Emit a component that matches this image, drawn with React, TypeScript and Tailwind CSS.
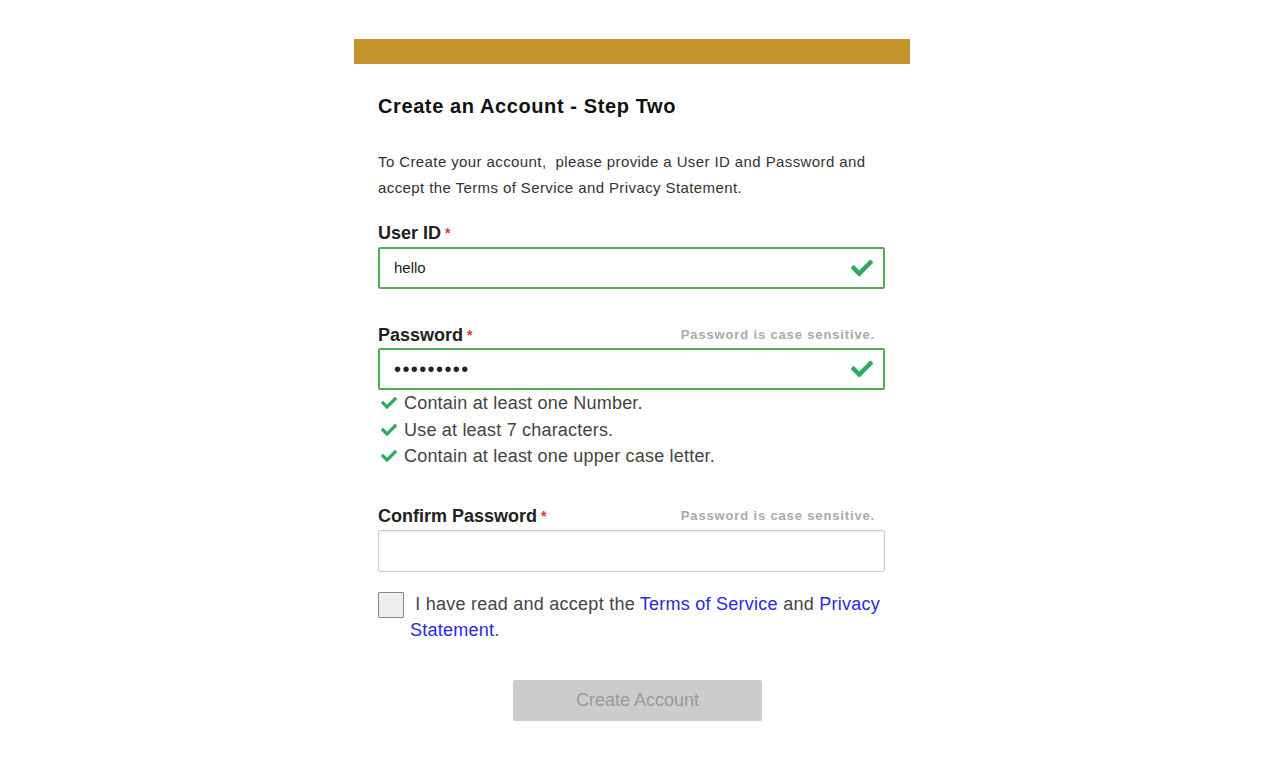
import { FaCheck } from "react-icons/fa";

const rules = [
  "Contain at least one Number.",
  "Use at least 7 characters.",
  "Contain at least one upper case letter.",
];

const Label = ({ text, hint }: { text: string; hint?: string }) => (
  <div className="flex items-end justify-between pr-[10px]">
    <span className="text-[18px] font-bold text-[#222] leading-[22px]">
      {text}
      <span className="text-[#d33] text-[14px] align-top ml-[4px]">*</span>
    </span>
    {hint && (
      <span className="text-[13px] font-bold text-[#aaa] tracking-[0.85px] leading-[20px] mb-[1px]">
        {hint}
      </span>
    )}
  </div>
);

const App = () => {
  return (
    <div className="min-h-[770px] bg-white pt-[39px] font-['Liberation_Sans',Arial,sans-serif]">
      <div className="ml-[354px] w-[556px]">
        <div className="h-[25px] bg-[#c3952a]" />

        <div className="px-[24px] pt-[30px]">
          <h1 className="text-[20px] font-bold text-[#111] tracking-[0.6px] leading-[24px]">
            Create an Account - Step Two
          </h1>

          <p className="mt-[31px] text-[15px] text-[#333] tracking-[0.4px] leading-[26px] w-[500px]">
            To Create your account,&nbsp; please provide a User ID and Password and accept the Terms of Service and Privacy Statement.
          </p>

          {/* User ID */}
          <div className="mt-[21px] w-[507px]">
            <Label text="User ID" />
            <div className="mt-[3px] h-[42px] border-2 border-[#4caf50] rounded-[2px] flex items-center justify-between pl-[14px] pr-[10px]">
              <span className="text-[15px] text-[#222]">hello</span>
              <FaCheck className="text-[#2fa95c] w-[22px] h-[22px]" />
            </div>
          </div>

          {/* Password */}
          <div className="mt-[35px] w-[507px]">
            <Label text="Password" hint="Password is case sensitive." />
            <div className="mt-[2px] h-[42px] border-2 border-[#4caf50] rounded-[2px] flex items-center justify-between pl-[14px] pr-[10px]">
              <span className="text-[20px] text-[#222] tracking-[1.4px] leading-none">•••••••••</span>
              <FaCheck className="text-[#2fa95c] w-[22px] h-[22px]" />
            </div>
            <ul>
              {rules.map(r => (
                <li key={r} className="flex items-center gap-[7px] pl-[3px] text-[18px] text-[#444] tracking-[0.2px] leading-[26.5px]">
                  <FaCheck className="text-[#2fa95c] w-[16px] h-[16px]" />
                  {r}
                </li>
              ))}
            </ul>
          </div>

          {/* Confirm Password */}
          <div className="mt-[35px] w-[507px]">
            <Label text="Confirm Password" hint="Password is case sensitive." />
            <div className="mt-[3px] h-[42px] border border-[#ccc] rounded-[2px] shadow-[inset_0_1px_2px_rgba(0,0,0,0.08)]" />
          </div>

          {/* Terms */}
          <div className="mt-[19px] flex items-start gap-[6px] w-[507px]">
            <div className="mt-[1px] w-[26px] h-[26px] shrink-0 bg-[#eee] border border-[#888] rounded-[1px]" />
            <p className="text-[18px] text-[#444] tracking-[0.25px] leading-[26.5px]">
              &nbsp;I have read and accept the{" "}
              <a className="text-[#2a2ae0]">Terms of Service</a> and{" "}
              <a className="text-[#2a2ae0]">Privacy Statement</a>.
            </p>
          </div>

          <button
            disabled
            className="mt-[36px] ml-[135px] w-[249px] h-[41px] bg-[#ccc] rounded-[2px] text-[18px] text-[#999]"
          >
            Create Account
          </button>
        </div>
      </div>
    </div>
  );
};

export default App;
